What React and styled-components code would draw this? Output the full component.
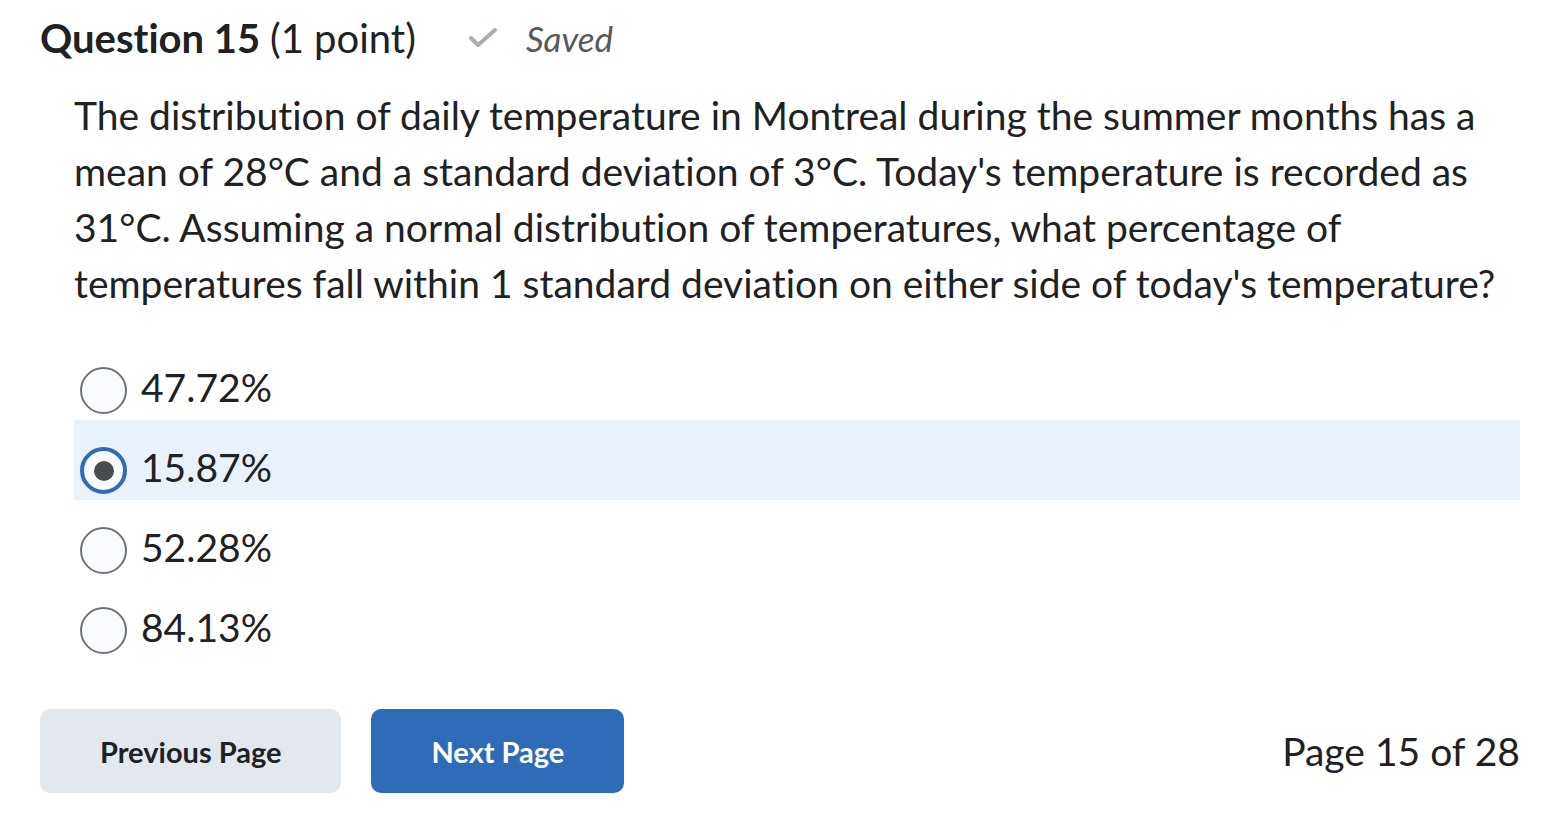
import React from "react";
import styled, { createGlobalStyle } from "styled-components";

const Global = createGlobalStyle`
  html, body { margin: 0; padding: 0; background: #ffffff; }
  body {
    font-family: Lato, "Open Sans", sans-serif;
    color: #202122;
    font-variant-ligatures: none;
  }
`;

const Page = styled.div`
  width: 1556px;
  height: 836px;
  box-sizing: border-box;
  padding: 10px 36px 0 40px;
  display: flex;
  flex-direction: column;
`;

const Header = styled.div`
  display: flex;
  align-items: center;
  height: 56px;
`;

const Title = styled.h2`
  margin: 0;
  font-size: 40px;
  font-weight: 700;
  color: #202122;
  line-height: 56px;
`;

const Points = styled.span`
  font-weight: 400;
`;

const SavedWrap = styled.div`
  display: flex;
  align-items: center;
  margin-left: 52px;
  gap: 28px;
  color: #565a5c;
  font-style: italic;
  font-size: 35px;
`;

const Body = styled.div`
  padding-left: 34px;
  margin-top: 21px;
`;

const Question = styled.p`
  margin: 0;
  font-size: 39px;
  line-height: 56px;
  color: #202122;
`;

const Options = styled.div`
  margin-top: 29px;
  display: flex;
  flex-direction: column;
`;

const Option = styled.label`
  display: flex;
  align-items: flex-start;
  height: 80px;
  box-sizing: border-box;
  padding: 27px 0 0 6px;
  gap: 14px;
  background: ${(p) => (p.$selected ? "#e9f1fb" : "transparent")};
  font-size: 39px;
  color: #202122;
`;

const OptionText = styled.span`
  line-height: 40px;
`;

const Radio = styled.span`
  flex: none;
  width: 47px;
  height: 47px;
  box-sizing: border-box;
  border-radius: 50%;
  border: ${(p) => (p.$selected ? "4px solid #2f6cb8" : "2px solid #6e7376")};
  background: #f9fbff;
  display: flex;
  align-items: center;
  justify-content: center;
  &::after {
    content: "";
    display: ${(p) => (p.$selected ? "block" : "none")};
    width: 20px;
    height: 20px;
    border-radius: 50%;
    background: #494c4e;
  }
`;

const Footer = styled.div`
  margin-top: 49px;
  display: flex;
  align-items: center;
  gap: 30px;
`;

const Button = styled.button`
  height: 84px;
  padding: 0 ${(p) => p.$padX}px;
  border: none;
  border-radius: 10px;
  font-family: Lato, "Open Sans", sans-serif;
  font-size: 29px;
  font-weight: 700;
  background: ${(p) => (p.$primary ? "#2f6cb8" : "#e3e8ef")};
  color: ${(p) => (p.$primary ? "#ffffff" : "#202122")};
  cursor: pointer;
`;

const PageInfo = styled.div`
  margin-left: auto;
  font-size: 39px;
  color: #202122;
`;

const options = ["47.72%", "15.87%", "52.28%", "84.13%"];

export default function App() {
  return (
    <>
      <Global />
      <Page>
        <Header>
          <Title>
            Question 15 <Points>(1 point)</Points>
          </Title>
          <SavedWrap>
            <svg width="30" height="24" viewBox="0 0 30 24">
              <path d="M3 12 L10 19 L27 4" fill="none" stroke="#a9aeb1" strokeWidth="4" strokeLinecap="round" strokeLinejoin="round" />
            </svg>
            <span>Saved</span>
          </SavedWrap>
        </Header>
        <Body>
          <Question>
            The distribution of daily temperature in Montreal during the summer months has a mean of 28°C and a standard deviation of 3°C. Today's temperature is recorded as 31°C. Assuming a normal distribution of temperatures, what percentage of temperatures fall within 1 standard deviation on either side of today's temperature?
          </Question>
          <Options>
            {options.map((o, i) => (
              <Option key={o} $selected={i === 1}>
                <Radio $selected={i === 1} />
                <OptionText>{o}</OptionText>
              </Option>
            ))}
          </Options>
        </Body>
        <Footer>
          <Button $padX={60}>Previous Page</Button>
          <Button $primary $padX={60}>Next Page</Button>
          <PageInfo>Page 15 of 28</PageInfo>
        </Footer>
      </Page>
    </>
  );
}
